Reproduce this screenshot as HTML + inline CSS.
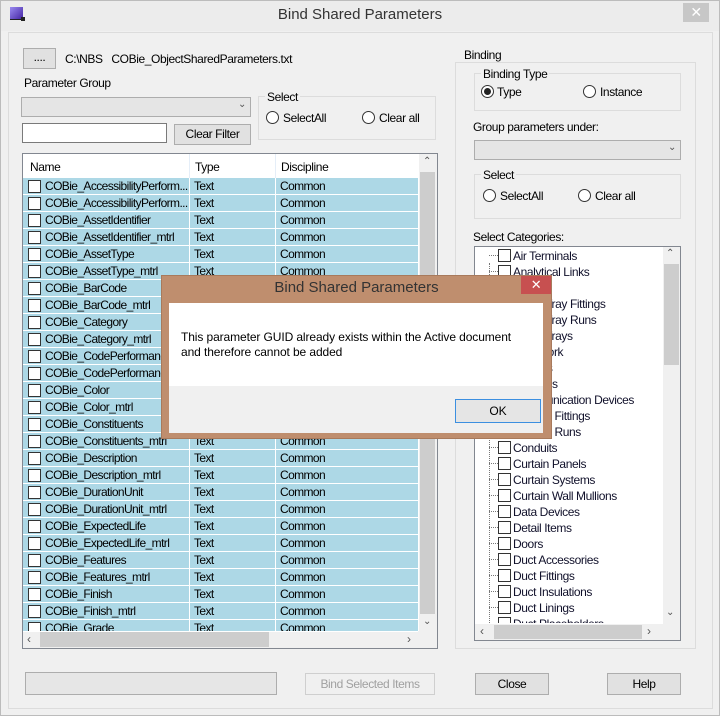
<!DOCTYPE html>
<html><head><meta charset="utf-8"><style>
*{box-sizing:border-box;margin:0;padding:0}
body{width:720px;height:716px;background:#f0f0f0;font-family:"Liberation Sans",sans-serif;font-size:12px;color:#000;position:relative;overflow:hidden;letter-spacing:-0.4px}
.a{position:absolute}
.btn{position:absolute;background:#e1e1e1;border:1px solid #adadad;text-align:center}
.grp{position:absolute;border:1px solid #dcdcdc}
.lbl{position:absolute;background:#f0f0f0;padding:0 2px;line-height:14px}
.rad{position:absolute;width:13px;height:13px;border:1px solid #333;border-radius:50%;background:#fff}
.cb{position:absolute;width:13px;height:13px;border:1px solid #333;background:#fff}
.row{position:absolute;left:23px;width:395px;height:17px;background:#add8e6;border-bottom:1px solid #fff;letter-spacing:-0.6px}
.row span{position:absolute;top:1px;line-height:15px}
.t{position:absolute;left:0;height:16px;line-height:16px;color:#10102a}
</style></head><body>
<div class="a" style="left:0;top:0;width:720px;height:716px;border:1px solid #bcbcbc;background:#f0f0f0"></div>
<div class="a" style="left:1px;top:1px;width:718px;height:30px;background:#ececec"></div>
<div class="a" style="left:10px;top:7px;width:13px;height:13px;background:linear-gradient(135deg,#9a8af0,#4020a0)"></div>
<div class="a" style="left:10px;top:19px;width:15px;height:1px;background:#222"></div>
<div class="a" style="left:21px;top:17px;width:4px;height:4px;background:#222"></div>
<div class="a" style="left:0;top:6px;width:720px;text-align:center;font-size:15px;color:#333;letter-spacing:0">Bind Shared Parameters</div>
<div class="a" style="left:683px;top:3px;width:26px;height:19px;background:#c7c7c7;color:#fff;text-align:center;font-size:14px;line-height:19px">✕</div>
<div class="a" style="left:8px;top:32px;width:705px;height:677px;border:1px solid #dcdcdc"></div>

<div class="btn" style="left:23px;top:48px;width:33px;height:21px;line-height:17px">....</div>
<div class="a" style="left:65px;top:52px">C:\NBS&nbsp;&nbsp; COBie_ObjectSharedParameters.txt</div>
<div class="a" style="left:24px;top:76px">Parameter Group</div>
<div class="a" style="left:21px;top:97px;width:230px;height:20px;border:1px solid #adadad;background:#e5e5e5"><span style="position:absolute;right:4px;top:1px;font-size:10px;color:#555">⌄</span></div>
<div class="grp" style="left:258px;top:96px;width:178px;height:44px"></div>
<div class="lbl" style="left:265px;top:90px">Select</div>
<div class="rad" style="left:266px;top:111px"></div><div class="a" style="left:283px;top:111px">SelectAll</div>
<div class="rad" style="left:362px;top:111px"></div><div class="a" style="left:379px;top:111px">Clear all</div>
<div class="a" style="left:22px;top:123px;width:145px;height:20px;border:1px solid #7a7a7a;background:#fff"></div>
<div class="btn" style="left:174px;top:124px;width:77px;height:21px;line-height:19px">Clear Filter</div>

<div class="a" style="left:22px;top:153px;width:416px;height:496px;border:1px solid #828790;background:#fff;overflow:hidden">
 <div class="a" style="left:0;top:0;width:396px;height:24px;background:#fff"></div>
 <div class="a" style="left:166px;top:0;width:1px;height:24px;background:#e5eef8"></div>
 <div class="a" style="left:252px;top:0;width:1px;height:24px;background:#e5eef8"></div>
 <div class="a" style="left:7px;top:6px">Name</div>
 <div class="a" style="left:172px;top:6px">Type</div>
 <div class="a" style="left:258px;top:6px">Discipline</div>
 <div class="a" style="left:396px;top:0;width:18px;height:477px;background:#f0f0f0"></div>
 <div class="a" style="left:397px;top:18px;width:15px;height:442px;background:#cdcdcd"></div>
 <div class="a" style="left:400px;top:2px;font-size:10px;color:#555">⌃</div>
 <div class="a" style="left:400px;top:462px;font-size:10px;color:#555">⌄</div>
 <div class="a" style="left:0;top:477px;width:414px;height:17px;background:#f0f0f0"></div>
 <div class="a" style="left:17px;top:478px;width:229px;height:15px;background:#cdcdcd"></div>
 <div class="a" style="left:4px;top:478px;color:#555">‹</div>
 <div class="a" style="left:384px;top:478px;color:#555">›</div>
</div>
<div id="rows"></div>

<div class="grp" style="left:455px;top:62px;width:241px;height:587px"></div>
<div class="lbl" style="left:462px;top:48px">Binding</div>
<div class="grp" style="left:474px;top:73px;width:207px;height:38px"></div>
<div class="lbl" style="left:481px;top:67px">Binding Type</div>
<div class="rad" style="left:481px;top:85px"></div><div class="a" style="left:484px;top:88px;width:7px;height:7px;border-radius:50%;background:#222"></div><div class="a" style="left:497px;top:85px">Type</div>
<div class="rad" style="left:583px;top:85px"></div><div class="a" style="left:600px;top:85px">Instance</div>
<div class="a" style="left:473px;top:120px">Group parameters under:</div>
<div class="a" style="left:474px;top:140px;width:207px;height:20px;border:1px solid #adadad;background:#e5e5e5"><span style="position:absolute;right:4px;top:1px;font-size:10px;color:#555">⌄</span></div>
<div class="grp" style="left:474px;top:174px;width:207px;height:45px"></div>
<div class="lbl" style="left:481px;top:168px">Select</div>
<div class="rad" style="left:483px;top:189px"></div><div class="a" style="left:500px;top:189px">SelectAll</div>
<div class="rad" style="left:578px;top:189px"></div><div class="a" style="left:595px;top:189px">Clear all</div>
<div class="a" style="left:473px;top:230px">Select Categories:</div>
<div class="a" style="left:474px;top:246px;width:207px;height:395px;border:1px solid #828790;background:#fff;overflow:hidden">
 <div id="tree" class="a" style="left:0;top:0;width:188px;height:376px;overflow:hidden"></div>
 <div class="a" style="left:188px;top:0;width:17px;height:377px;background:#f0f0f0"></div>
 <div class="a" style="left:189px;top:17px;width:15px;height:101px;background:#cdcdcd"></div>
 <div class="a" style="left:191px;top:1px;font-size:10px;color:#555">⌃</div>
 <div class="a" style="left:191px;top:360px;font-size:10px;color:#555">⌄</div>
 <div class="a" style="left:0;top:377px;width:205px;height:16px;background:#f0f0f0"></div>
 <div class="a" style="left:19px;top:378px;width:148px;height:14px;background:#cdcdcd"></div>
 <div class="a" style="left:5px;top:377px;color:#555">‹</div>
 <div class="a" style="left:172px;top:377px;color:#555">›</div>
</div>

<div class="a" style="left:25px;top:672px;width:252px;height:23px;border:1px solid #adadad;background:#e6e6e6"></div>
<div class="btn" style="left:305px;top:673px;width:130px;height:22px;line-height:20px;color:#a0a0a0;background:#f0f0f0;border-color:#cfcfcf">Bind Selected Items</div>
<div class="btn" style="left:475px;top:673px;width:74px;height:22px;line-height:20px">Close</div>
<div class="btn" style="left:607px;top:673px;width:74px;height:22px;line-height:20px">Help</div>

<div class="a" style="left:161px;top:275px;width:391px;height:164px;background:#bf8e6e;border:1px solid #a87a5c"></div>
<div class="a" style="left:161px;top:279px;width:391px;text-align:center;font-size:15px;color:#333;letter-spacing:0">Bind Shared Parameters</div>
<div class="a" style="left:521px;top:276px;width:30px;height:18px;background:#c75050;color:#fff;text-align:center;line-height:18px;font-size:13px">✕</div>
<div class="a" style="left:169px;top:303px;width:374px;height:130px;background:#f0f0f0"></div>
<div class="a" style="left:169px;top:303px;width:374px;height:83px;background:#fff"></div>
<div class="a" style="left:181px;top:330px;font-size:12px;line-height:15px;letter-spacing:-0.1px">This parameter GUID already exists within the Active document<br>and therefore cannot be added</div>
<div class="a" style="left:455px;top:399px;width:86px;height:24px;border:1px solid #3c8fe0;background:#e5e5e5;text-align:center;line-height:22px;letter-spacing:0">OK</div>

<script>
var n=["COBie_AccessibilityPerform...","COBie_AccessibilityPerform...","COBie_AssetIdentifier","COBie_AssetIdentifier_mtrl","COBie_AssetType","COBie_AssetType_mtrl","COBie_BarCode","COBie_BarCode_mtrl","COBie_Category","COBie_Category_mtrl","COBie_CodePerformance","COBie_CodePerformance...","COBie_Color","COBie_Color_mtrl","COBie_Constituents","COBie_Constituents_mtrl","COBie_Description","COBie_Description_mtrl","COBie_DurationUnit","COBie_DurationUnit_mtrl","COBie_ExpectedLife","COBie_ExpectedLife_mtrl","COBie_Features","COBie_Features_mtrl","COBie_Finish","COBie_Finish_mtrl","COBie_Grade"];
var h="";
n.forEach(function(s,i){var y=178+17*i;var H=i==26?12:17;
h+='<div class="row" style="top:'+y+'px;height:'+H+'px;overflow:hidden"><div class="cb" style="left:5px;top:2px"></div><span style="left:22px;width:143px;overflow:hidden;white-space:nowrap">'+s+'</span><span style="left:171px">Text</span><span style="left:257px">Common</span><div class="a" style="left:166px;top:0;width:1px;height:17px;background:#fff"></div><div class="a" style="left:252px;top:0;width:1px;height:17px;background:#fff"></div></div>';});
document.getElementById("rows").innerHTML=h;
var t=["Air Terminals","Analytical Links","Areas","Cable Tray Fittings","Cable Tray Runs","Cable Trays","Casework","Ceilings","Columns","Communication Devices","Conduit Fittings","Conduit Runs","Conduits","Curtain Panels","Curtain Systems","Curtain Wall Mullions","Data Devices","Detail Items","Doors","Duct Accessories","Duct Fittings","Duct Insulations","Duct Linings","Duct Placeholders"];
var g='<div class="a" style="left:14px;top:16px;width:0;height:370px;border-left:1px dotted #777"></div>';
t.forEach(function(s,i){var y=1+16*i;
g+='<div class="a" style="left:14px;top:'+(y+7)+'px;width:9px;border-top:1px dotted #777"></div><div class="cb" style="left:23px;top:'+(y+1)+'px"></div><div class="t" style="left:38px;top:'+y+'px">'+s+'</div>';});
document.getElementById("tree").innerHTML=g;
</script>
</body></html>
